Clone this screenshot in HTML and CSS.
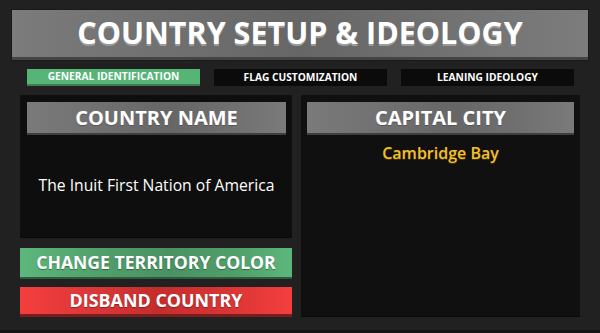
FILE: index.html
```html
<!DOCTYPE html>
<html>
<head>
<meta charset="utf-8">
<link rel="stylesheet" href="styles.css">
</head>
<body>
<div class="screen">
  <div class="title-bar"><h1 class="title">COUNTRY SETUP &amp; IDEOLOGY</h1></div>
  <div class="tabs">
    <div class="tab tab-active">GENERAL IDENTIFICATION</div>
    <div class="tab">FLAG CUSTOMIZATION</div>
    <div class="tab">LEANING IDEOLOGY</div>
  </div>
  <div class="content">
    <div class="left-col">
      <div class="panel panel-name">
        <div class="panel-head">COUNTRY NAME</div>
        <div class="name-body"><span class="country-name">The Inuit First Nation of America</span></div>
      </div>
      <div class="btn btn-green">CHANGE TERRITORY COLOR</div>
      <div class="btn btn-red">DISBAND COUNTRY</div>
    </div>
    <div class="panel panel-capital">
      <div class="panel-head panel-head-right">CAPITAL CITY</div>
      <div class="capital">Cambridge Bay</div>
    </div>
  </div>
</div>
</body>
</html>
```
FILE: styles.css
```css
* { box-sizing: border-box; }
html, body { margin: 0; padding: 0; }
body {
  background: #151515;
  font-family: "Open Sans", "Noto Sans", sans-serif;
  color: #fff;
  width: 600px;
  height: 333px;
  overflow: hidden;
}
.screen {
  height: 330px;
  background: #212121;
  padding: 10px 12px 0 12px;
  display: flex;
  flex-direction: column;
}
.title-bar {
  height: 50px;
  background: linear-gradient(90deg, #7b7b7b 0%, #6f6f6f 30%, #666 50%, #6f6f6f 70%, #7c7c7c 100%);
  border-bottom: 3px solid #444;
  box-shadow: 0 0 0 1px #1a1a1a;
  display: flex;
  align-items: center;
  justify-content: center;
}
.title {
  margin: 0;
  font-size: 30.5px;
  font-weight: 700;
  letter-spacing: 0;
  line-height: 1;
  text-shadow: 0 2px 0 #9a9a9a;
  position: relative;
  top: -1px;
}
.tabs {
  display: flex;
  gap: 14px;
  padding: 0 14px 0 15px;
  margin-top: 9px;
}
.tab {
  flex: 1;
  height: 17px;
  background: #0b0b0b;
  font-size: 10.2px;
  font-weight: 700;
  display: flex;
  align-items: center;
  justify-content: center;
  line-height: 1;
  padding-bottom: 1px;
}
.tab-active {
  background: #55b476;
  border-bottom: 2px solid #3b7e52;
  padding-bottom: 0;
}
.content {
  display: flex;
  gap: 9px;
  margin-top: 9px;
  padding: 0 8px;
}
.left-col {
  width: 272px;
  display: flex;
  flex-direction: column;
}
.panel {
  background: #0e0e0e;
  display: flex;
  flex-direction: column;
}
.panel-name {
  height: 143px;
  padding: 7px 6px 0 7px;
  border-bottom: 1px solid #080808;
}
.panel-capital {
  width: 279px;
  height: 222px;
  padding: 7px 6px 0 6px;
  background: #101010;
  border-bottom: 1px solid #080808;
}
.panel-head {
  height: 33px;
  background: linear-gradient(90deg, #7a7a7a 0%, #6e6e6e 35%, #666 55%, #707070 80%, #7a7a7a 100%);
  border-bottom: 2px solid #3e3e3e;
  display: flex;
  align-items: center;
  justify-content: center;
  font-size: 20px;
  font-weight: 700;
  line-height: 1;
  text-shadow: 0 1px 0 #555;
}
.name-body {
  flex: 1;
  display: flex;
  align-items: center;
  justify-content: center;
  padding-bottom: 2px;
}
.country-name {
  font-size: 15.7px;
  font-weight: 400;
}
.capital {
  margin-top: 8px;
  text-align: center;
  color: #f2bf2e;
  font-size: 16px;
  font-weight: 600;
  line-height: 20px;
  text-shadow: 0 1px 1px #4a3a00;
}
.btn {
  height: 31px;
  display: flex;
  align-items: center;
  justify-content: center;
  font-size: 17.6px;
  font-weight: 700;
  line-height: 1;
  text-shadow: 0 1px 1px rgba(0,0,0,0.35);
}
.btn-green {
  margin-top: 10px;
  background: linear-gradient(90deg, #5cb77c 0%, #4f9c69 35%, #4a9263 55%, #50a06b 80%, #5cb77c 100%);
  border-bottom: 2px solid #2f5a3d;
}
.btn-red {
  margin-top: 8px;
  height: 30px;
  font-size: 17.9px;
  background: linear-gradient(90deg, #f43e3e 0%, #d93636 30%, #c52d2d 50%, #d83434 75%, #f43e3e 100%);
  border-bottom: 3px solid #7a1d1d;
}
```
